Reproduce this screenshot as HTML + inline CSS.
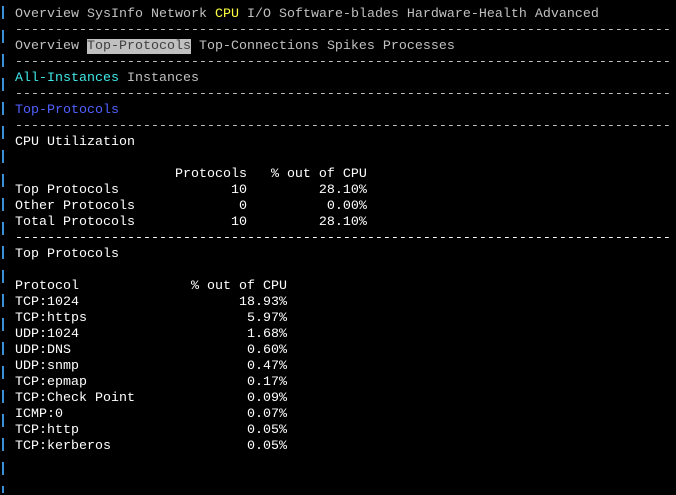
<!DOCTYPE html>
<html><head><meta charset="utf-8"><style>
html,body{margin:0;padding:0;background:#000;width:676px;height:495px;overflow:hidden}
.bar{position:absolute;left:2px;top:0;width:2px;height:495px;background:repeating-linear-gradient(to bottom,transparent 0,transparent 8px,#3a8fd8 8px,#3a8fd8 21px,transparent 21px,transparent 24px);background-position:0 -2px}
pre{position:absolute;left:15px;top:7px;margin:0;font-family:"Liberation Mono",monospace;font-size:13.33px;line-height:16px;color:#fff;white-space:pre}
.g{color:#c0c0c0}.y{color:#ffff40}.c{color:#40e8e8}.b{color:#5060ff}
.sel{background:#c0c0c0;color:#404040}
.d{color:#c0c0c0}
</style></head><body>
<div class="bar"></div>
<pre><span class="g">Overview SysInfo Network <span class="y">CPU</span> I/O Software-blades Hardware-Health Advanced</span>
<span class="d">----------------------------------------------------------------------------------</span>
<span class="g">Overview <span class="sel">Top-Protocols</span> Top-Connections Spikes Processes</span>
<span class="d">----------------------------------------------------------------------------------</span>
<span class="c">All-Instances</span> <span class="g">Instances</span>
<span class="d">----------------------------------------------------------------------------------</span>
<span class="b">Top-Protocols</span>
<span class="d">----------------------------------------------------------------------------------</span>
CPU Utilization

                    Protocols   % out of CPU
Top Protocols              10         28.10%
Other Protocols             0          0.00%
Total Protocols            10         28.10%
----------------------------------------------------------------------------------
Top Protocols

Protocol              % out of CPU
TCP:1024                    18.93%
TCP:https                    5.97%
UDP:1024                     1.68%
UDP:DNS                      0.60%
UDP:snmp                     0.47%
TCP:epmap                    0.17%
TCP:Check Point              0.09%
ICMP:0                       0.07%
TCP:http                     0.05%
TCP:kerberos                 0.05%</pre>
</body></html>
